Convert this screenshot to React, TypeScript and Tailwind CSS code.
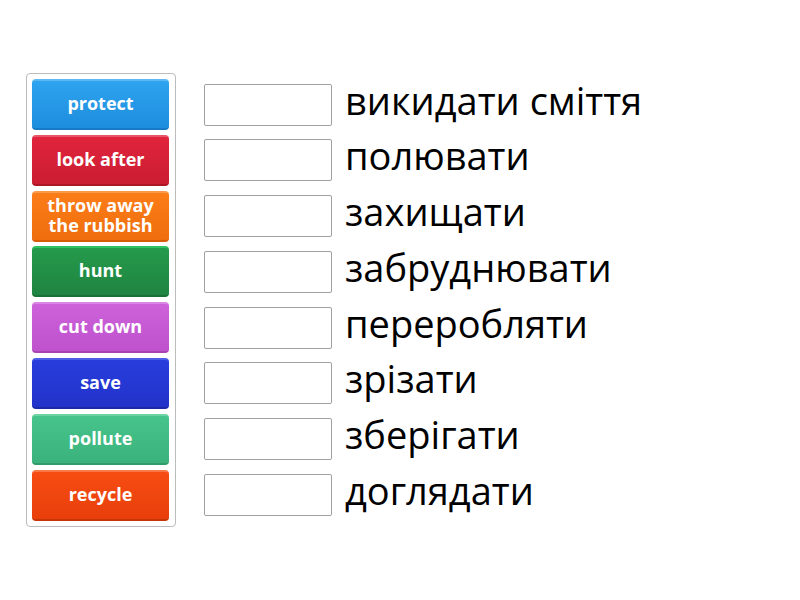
const tiles = [
  { label: "protect", bg: "bg-gradient-to-b from-[#2ea3ef] to-[#1d8ddd]", edge: "border-t-[#5bb8f3] border-b-[#167ac4]" },
  { label: "look after", bg: "bg-gradient-to-b from-[#e0243c] to-[#cb1d32]", edge: "border-t-[#e8566a] border-b-[#ae1627]" },
  { label: "throw away the rubbish", bg: "bg-gradient-to-b from-[#fb7d18] to-[#ef6d0c]", edge: "border-t-[#fc9a4c] border-b-[#d65c06]" },
  { label: "hunt", bg: "bg-gradient-to-b from-[#259a4c] to-[#1f8440]", edge: "border-t-[#2fc260] border-b-[#1a7136]" },
  { label: "cut down", bg: "bg-gradient-to-b from-[#cd62da] to-[#bf51cd]", edge: "border-t-[#d985e3] border-b-[#a744b4]" },
  { label: "save", bg: "bg-gradient-to-b from-[#283ddd] to-[#2233c9]", edge: "border-t-[#4c5ee5] border-b-[#1c2aa9]" },
  { label: "pollute", bg: "bg-gradient-to-b from-[#46c48b] to-[#3bb27c]", edge: "border-t-[#6dd3a5] border-b-[#2f9c69]" },
  { label: "recycle", bg: "bg-gradient-to-b from-[#f74c12] to-[#e83f0b]", edge: "border-t-[#f97848] border-b-[#c93406]" },
];

const words = [
  "викидати сміття",
  "полювати",
  "захищати",
  "забруднювати",
  "переробляти",
  "зрізати",
  "зберігати",
  "доглядати",
];

export default function App() {
  return (
    <div
      className="h-[600px] w-[800px] bg-white"
      style={{ fontFamily: '"Open Sans", "Noto Sans", sans-serif' }}
    >
      <div className="flex pl-[26px] pt-[73px]">
        <div className="flex flex-col gap-[4.8px] rounded-[4px] border border-[#bcbcbc] py-[5px] pr-[6px] pl-[5px]">
          {tiles.map((tile) => (
            <div
              key={tile.label}
              className={`flex h-[51px] w-[137px] items-center justify-center rounded-[4px] border-t-2 border-b-2 px-1 pb-[3px] text-center text-[18px] leading-[20px] font-bold text-white ${tile.bg} ${tile.edge}`}
            >
              {tile.label}
            </div>
          ))}
        </div>

        <div className="ml-[28px] flex flex-col gap-[4.8px] pt-[6px]">
          {words.map((word) => (
            <div key={word} className="flex h-[51px] items-center">
              <div className="h-[42px] w-[128px] rounded-[2px] border border-[#a0a0a0] bg-white" />
              <span className="mb-[10px] ml-[13px] text-[38px] leading-none text-black">
                {word}
              </span>
            </div>
          ))}
        </div>
      </div>
    </div>
  );
}
